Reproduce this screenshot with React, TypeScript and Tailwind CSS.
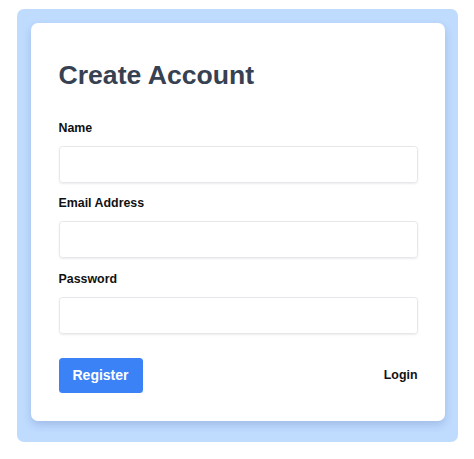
const fields = [
  { id: 'name', label: 'Name', type: 'text' },
  { id: 'email', label: 'Email Address', type: 'email' },
  { id: 'password', label: 'Password', type: 'password' },
];

export default function App() {
  return (
    <div className="min-h-screen bg-white flex justify-center pt-[9px] font-['Liberation_Sans',Arial,sans-serif]">
      <div className="w-[441px] h-[433px] bg-[#bfdbfe] rounded-[7px] pt-[14px] pl-[14px] pr-[13px]">
        <div className="bg-white rounded-[7px] shadow-[0_4px_8px_rgba(30,58,138,0.18)] pt-[36px] pl-[28px] pr-[27px] pb-[28px]">
          <h1 className="text-[26.6px] leading-[31.5px] font-bold text-[#374151] mb-[29px] translate-y-[1px]">
            Create Account
          </h1>

          <form onSubmit={(e) => e.preventDefault()}>
            {fields.map((f) => (
              <div key={f.id} className="mb-[12.5px]">
                <label
                  htmlFor={f.id}
                  className="block text-[12.4px] leading-[17.5px] font-bold text-[#111111] mb-[8.5px]"
                >
                  {f.label}
                </label>
                <input
                  id={f.id}
                  type={f.type}
                  className="block w-full h-[37px] px-[10px] text-[14px] border border-[#e5e7eb] rounded-[3.5px] shadow-[0_1px_2px_rgba(0,0,0,0.08)] outline-none"
                />
              </div>
            ))}

            <div className="flex items-center justify-between mt-[24px]">
              <button
                type="submit"
                className="h-[35px] px-[14px] bg-[#3b82f6] text-white text-[14px] font-bold rounded-[3.5px]"
              >
                Register
              </button>
              <a href="#" className="text-[12.4px] font-bold text-[#111111]">
                Login
              </a>
            </div>
          </form>
        </div>
      </div>
    </div>
  );
}
